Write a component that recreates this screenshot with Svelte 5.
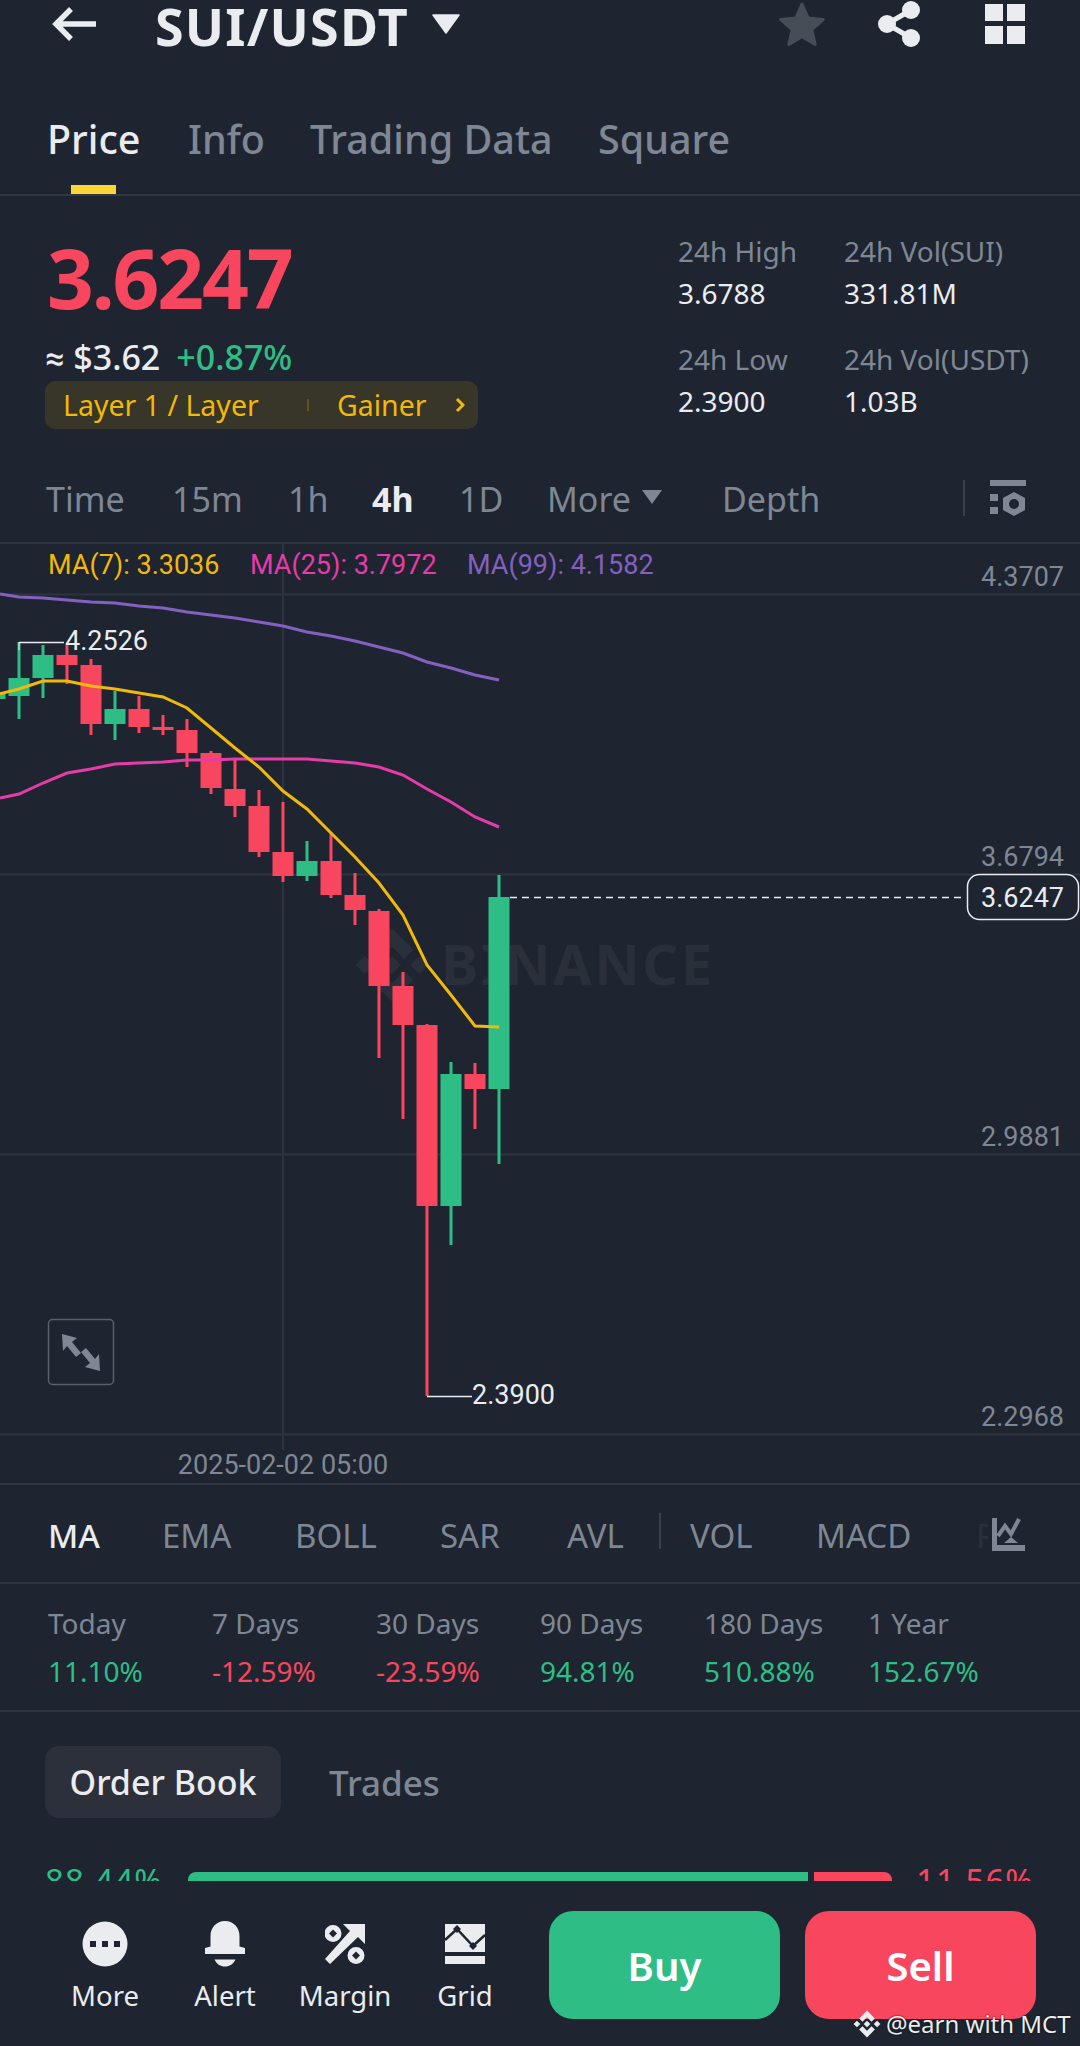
<script>
  const up = '#2ebd85', down = '#f9465f';
  // [high, low, bodyTop, bodyBottom, isUp]
  const raw = [
    [686,699,692,699,1],
    [642,719,678,696,1],[645,698,655,678,1],[645,684,655,665,0],[659,735,665,724,0],
    [691,740,709,724,1],[696,733,709,727,0],[715,735,727,730,0],[719,767,730,753,0],
    [751,794,753,788,0],[760,817,789,806,0],[790,857,806,852,0],[802,882,852,876,0],
    [841,881,861,876,1],[833,898,861,895,0],[873,925,895,910,0],[909,1058,911,986,0],
    [972,1119,986,1025,0],[1024,1396,1025,1206,0],[1062,1245,1074,1206,1],[1063,1129,1074,1089,0],
    [875,1164,897,1089,1]
  ];
  const candles = raw.map((c, i) => ({ x: -5 + i * 24, hi: c[0], lo: c[1], top: c[2], bot: c[3], up: c[4] }));
  const toPts = (ys, start) => ys.map((y, i) => `${start + i * 24},${y}`).join(' ');
  const ma7 = toPts([695,689,681,681,686,689,693,697,708,728,748,767,791,809,833,857,883,915,965,995,1026], -5) + ' 499,1027';
  const ma25 = '0,798 ' + toPts([794,783,773,769,764,763,762,760,760,759,759,759,759,761,763,767,775,789,802,817,827], 19);
  const ma99 = '0,594 ' + toPts([597,598,600,602,603,606,608,612,615,618,622,626,632,636,641,647,653,662,668,675,680], 19);
  const off = 544;
  const chartH = 940;
  const tabs = [['Price', true, 141], ['Info', false, 122], ['Trading Data', false, 288], ['Square', false, 140]];
  const stats = [['Today','11.10%',1],['7 Days','-12.59%',0],['30 Days','-23.59%',0],['90 Days','94.81%',1],['180 Days','510.88%',1],['1 Year','152.67%',1]];
  const logo = ['50,2 78,30 66,42 50,26 34,42 22,30','50,98 78,70 66,58 50,74 34,58 22,70','14,38 26,50 14,62 2,50','86,38 98,50 86,62 74,50','50,38 62,50 50,62 38,50'];
</script>

<div class="app">
  <header class="top">
    <svg class="back" viewBox="0 0 46 34" width="46" height="34"><path d="M44 17H5M19 2 4 17l15 15" fill="none" stroke="#eaecef" stroke-width="5.5"/></svg>
    <h1>SUI/USDT</h1>
    <svg class="caret" viewBox="0 0 28 20" width="28" height="20"><path d="M1 1h26L14 19z" fill="#eaecef" stroke="#eaecef" stroke-width="1.500" stroke-linejoin="round"/></svg>
    <div class="top-icons">
      <svg viewBox="0 0 46 46" width="46" height="46"><path d="M23 3l6.200 14 15 1.500-11.400 10 3.400 15L23 35.800 9.800 43.500l3.400-15-11.400-10 15-1.500z" fill="#474d57" stroke="#474d57" stroke-width="3" stroke-linejoin="round"/></svg>
      <svg class="share" viewBox="0 0 42 46" width="42" height="46"><g fill="#eaecef"><circle cx="33" cy="9" r="9"/><circle cx="9" cy="23" r="9"/><circle cx="33" cy="37" r="9"/></g><path d="M33 9 9 23l24 14" fill="none" stroke="#eaecef" stroke-width="5"/></svg>
      <svg class="apps" viewBox="0 0 40 40" width="40" height="40"><path d="M0 0h18v17H0zM22 0h18v17H22zM0 22h18v18H0zM22 22h18v18H22z" fill="#eaecef"/></svg>
    </div>
  </header>

  <nav class="tabs">
    {#each tabs as [t, on, w]}<span class="tab" class:on style:width="{w}px">{t}</span>{/each}
  </nav>

  <section class="summary">
    <div class="left">
      <div class="price">3.6247</div>
      <div class="sub"><span class="usd">≈ $3.62</span><span class="pct">+0.87%</span></div>
      <div class="tag"><span class="tag-a">Layer 1 / Layer</span><i></i><span class="tag-b">Gainer</span>
        <svg viewBox="0 0 10 16" width="10" height="16"><path d="M2 2l6 6-6 6" fill="none" stroke="#f0b90b" stroke-width="3"/></svg>
      </div>
    </div>
    <div class="facts">
      <div><label>24h High</label><b>3.6788</b></div>
      <div><label>24h Vol(SUI)</label><b>331.81M</b></div>
      <div><label>24h Low</label><b>2.3900</b></div>
      <div><label>24h Vol(USDT)</label><b>1.03B</b></div>
    </div>
  </section>

  <div class="frames">
    <span class="f1">Time</span><span class="f2">15m</span><span class="f3">1h</span><span class="f4 on">4h</span><span class="f5">1D</span>
    <span class="f6">More</span>
    <svg class="f6c" viewBox="0 0 20 14" width="20" height="14"><path d="M0 0h20L10 14z" fill="#7f8794"/></svg>
    <span class="f7">Depth</span>
    <i class="sep"></i>
    <svg class="set" viewBox="0 0 36 36" width="36" height="36"><path d="M0 0h36v6H0zM0 14h8v7H0zM0 27h8v7H0z" fill="#7f8794"/><path fill-rule="evenodd" d="M24 12l11 6v12l-11 6-11-6V18zM24 19a5 5 0 100 10 5 5 0 000-10z" fill="#7f8794"/></svg>
  </div>

  <div class="chart">
    <svg viewBox="0 {off} 1080 {chartH}" width="1080" height={chartH}>
      <g stroke="#2e343e" stroke-width="2">
        <path d="M0 594.500H1080M0 874.500H1080M0 1154.500H1080M0 1434.500H1080" fill="none"/>
        <path d="M283 544V1450" fill="none"/>
      </g>
      <g fill="#2a2f3a">
        {#each logo as p}<polygon points={p} transform="translate(354 927) scale(.76)"/>{/each}
        <text x="441" y="985" class="wm">BINANCE</text>
      </g>
      {#each candles as c}
        <rect x={c.x - 1.500} y={c.hi} width="3" height={c.lo - c.hi} fill={c.up ? up : down}/>
        <rect x={c.x - 10.500} y={c.top} width="21" height={c.bot - c.top} fill={c.up ? up : down}/>
      {/each}
      <polyline points={ma99} fill="none" stroke="#8460c0" stroke-width="3"/>
      <polyline points={ma25} fill="none" stroke="#e63ba8" stroke-width="3"/>
      <polyline points={ma7} fill="none" stroke="#f0b90b" stroke-width="3"/>

      <path d="M19 642.500H64M427 1396.500H472" stroke="#eaecef" stroke-width="1.500" fill="none"/>
      <path d="M19 642v8" stroke="#eaecef" stroke-width="1"/>
      <path d="M510 897.500H962" stroke="#eaecef" stroke-width="1.500" stroke-dasharray="7 5" fill="none"/>

      <text x="48" y="574" class="ma" fill="#f0b90b">MA(7): 3.3036</text>
      <text x="250" y="574" class="ma" fill="#e63ba8">MA(25): 3.7972</text>
      <text x="467" y="574" class="ma" fill="#8460c0">MA(99): 4.1582</text>

      <text x="65" y="650" class="ma" fill="#eaecef">4.2526</text>
      <text x="472" y="1404" class="ma" fill="#eaecef">2.3900</text>

      <g class="axis" text-anchor="end" fill="#7f8794">
        <text x="1064" y="586">4.3707</text>
        <text x="1064" y="866">3.6794</text>
        <text x="1064" y="1146">2.9881</text>
        <text x="1064" y="1426">2.2968</text>
      </g>
      <rect x="967.500" y="874.500" width="111" height="45" rx="12" fill="#1e2530" stroke="#eaecef" stroke-width="1.500"/>
      <text x="1064" y="907" class="axis" text-anchor="end" fill="#eaecef">3.6247</text>

      <rect x="48.500" y="1319.500" width="65" height="65" rx="4" fill="#1e2530" stroke="#5a616d" stroke-width="1.500"/>
      <path d="M62 1334l15 4-5 4 9 11-5 4-9-11-4 5zM100 1371l-15-4 5-4-9-11 5-4 9 11 4-5z" fill="#7f8794"/>
      <text x="283" y="1474" class="axis" text-anchor="middle" fill="#7f8794">2025-02-02 05:00</text>
    </svg>
  </div>

  <div class="inds">
    <span class="on i1">MA</span><span class="i2">EMA</span><span class="i3">BOLL</span><span class="i4">SAR</span><span class="i5">AVL</span>
    <i class="sep2"></i>
    <span class="i6">VOL</span><span class="i7">MACD</span><span class="i8">RSI</span>
    <svg class="ind-icon" viewBox="0 0 33 33" width="33" height="33"><path d="M0 0h5v27h28v6H0z" fill="#7f8794"/><path d="M6 18l7-10 6 8 8-15" fill="none" stroke="#7f8794" stroke-width="4"/><path d="M19 19l7 6H12z" fill="#7f8794"/></svg>
  </div>

  <div class="perf">
    {#each stats as [l, v, g]}
      <div><label>{l}</label><b class:g={g} class:r={!g}>{v}</b></div>
    {/each}
  </div>

  <section class="book">
    <div class="book-tabs"><span class="pill">Order Book</span><span class="tr">Trades</span></div>
    <div class="ratio">
      <span class="g">88.44%</span>
      <div class="bar"><em class="bg"></em><em class="br"></em></div>
      <span class="r">11.56%</span>
    </div>
  </section>

  <footer class="bottom">
    <div class="act"><svg viewBox="0 0 46 46" width="46" height="46"><circle cx="23" cy="23" r="22.500" fill="#eaecef"/><path d="M8 20h6v6H8zM20 20h6v6h-6zM32 20h6v6h-6z" fill="#1e2530"/></svg><span>More</span></div>
    <div class="act"><svg viewBox="0 0 46 46" width="46" height="46"><path d="M23 0c9 0 14.500 7 14.500 15v10.500L43 27v6H3v-6l5.500-1.500V15C8.500 7 14 0 23 0zM12.500 38.500h21C31.500 43 27.500 45.500 23 45.500S14.500 43 12.500 38.500z" fill="#eaecef"/></svg><span>Alert</span></div>
    <div class="act"><svg viewBox="0 0 40 40" width="40" height="46"><g fill="#eaecef"><path d="M18 0h22v20l-7-7L5 40l-5-5L25 7z"/><path fill-rule="evenodd" d="M8 1a8.500 8.500 0 100 17A8.500 8.500 0 008 1zM8 5.500l4 4-4 4-4-4zM31 23a8.500 8.500 0 100 17 8.500 8.500 0 000-17zM31 27.500l4 4-4 4-4-4z"/></g></svg><span>Margin</span></div>
    <div class="act"><svg viewBox="0 0 40 40" width="40" height="46"><path d="M0 0h40v28H0zM0 32h40v8H0z" fill="#eaecef"/><path d="M0 16 12 5l16 17L40 11" fill="none" stroke="#1e2530" stroke-width="2.500"/><path d="M12 1l4 4-4 4-4-4zM28 18l4 4-4 4-4-4z" fill="#1e2530"/></svg><span>Grid</span></div>
    <button class="buy">Buy</button>
    <button class="sell">Sell</button>
    <div class="credit">
      <svg viewBox="0 0 100 100" width="28" height="28">{#each logo as p}<polygon points={p} fill="#eaecef"/>{/each}</svg>
      <span>@earn with MCT</span>
    </div>
  </footer>
</div>

<style>
  :global(body) { margin: 0; background: #1e2530; }
  .app { position: relative; width: 1080px; height: 2046px; overflow: hidden; background: #1e2530; color: #eaecef; font-family: "Noto Sans", Roboto, sans-serif; display: flex; flex-direction: column; }
  i, em { display: block; font-style: normal; }
  label { display: block; color: #7f8794; }

  .top { height: 52px; flex: none; display: flex; align-items: center; padding-left: 52px; }
  .back { margin-top: -4px; }
  h1 { margin: -4px 0 0 57px; width: 277px; font-size: 52px; font-weight: 700; line-height: 60px; height: 56px; letter-spacing: 1.200px; white-space: nowrap; }
  .caret { margin: -4px 0 0 0; }
  .top-icons { margin-left: auto; display: flex; align-items: center; padding-right: 55px; margin-top: -4px; }
  .share { margin-left: 53px; }
  .apps { margin-left: 65px; }

  .tabs { height: 144px; flex: none; box-sizing: border-box; display: flex; padding: 62px 0 0 47px; border-bottom: 2px solid #323843; font-size: 39.500px; line-height: 50px; color: #7f8794; font-weight: 500; }
  .tab { position: relative; height: 80px; flex: none; }
  .tab.on { color: #eaecef; }
  .tab.on::after { content: ''; position: absolute; left: 24px; bottom: 0; width: 45px; height: 9px; background: #fcd535; }

  .summary { flex: none; height: 233px; display: flex; }
  .left { width: 678px; padding: 36px 0 0 45px; box-sizing: border-box; flex: none; }
  .price { font-size: 82px; line-height: 90px; font-weight: 700; color: #f9465f; margin-left: 2px; letter-spacing: -2.200px; }
  .sub { display: flex; gap: 16px; font-size: 34px; line-height: 40px; margin-top: 15px; font-weight: 500; }
  .pct { color: #2ebd85; }
  .tag { margin-top: 4px; width: 433px; height: 48px; box-sizing: border-box; border-radius: 10px; background: #383529; display: flex; align-items: center; padding-left: 18px; font-size: 28.500px; color: #f0b90b; }
  .tag-a { width: 244px; flex: none; }
  .tag i { width: 2px; height: 12px; background: #5c5222; flex: none; }
  .tag-b { margin-left: 28px; width: 118px; flex: none; }
  .facts { display: grid; grid-template-columns: 166px 236px; grid-auto-rows: 108px; padding-top: 36px; font-size: 28px; line-height: 38px; }
  .facts b { display: block; font-weight: 400; margin-top: 4px; }

  .frames { flex: none; height: 115px; position: relative; display: flex; align-items: center; font-size: 34px; color: #7f8794; box-sizing: border-box; padding: 26px 0 0 46px; border-bottom: 2px solid #2e343e; }
  .frames span { flex: none; }
  .frames .on { color: #eaecef; font-weight: 700; }
  .f1 { width: 126px; } .f2 { width: 116px; } .f3 { width: 84px; } .f4 { width: 87px; } .f5 { width: 88px; } .f6 { width: 95px; }
  .f6c { margin: -4px 0 0 0; flex: none; }
  .f7 { margin-left: 60px; }
  .sep { width: 2px; height: 36px; background: #3a404b; margin-left: auto; margin-top: -2px; }
  .set { margin: -2px 54px 0 25px; flex: none; }

  .chart { flex: none; height: 939px; }
  .chart svg { display: block; }
  .ma { font-size: 27px; font-family: Roboto, sans-serif; }
  .axis text, text.axis { font-size: 27px; font-family: Roboto, sans-serif; }
  .wm { font-size: 56px; font-weight: 700; font-family: "Noto Sans", sans-serif; letter-spacing: 2.500px; }

  .inds { flex: none; height: 101px; border-top: 2px solid #323843; border-bottom: 2px solid #2e343e; box-sizing: border-box; position: relative; display: flex; align-items: center; padding: 3px 0 0 48px; font-size: 33px; color: #7f8794; }
  .inds span { flex: none; }
  .inds .on { color: #eaecef; font-weight: 500; }
  .i1 { width: 114px; } .i2 { width: 133px; } .i3 { width: 145px; } .i4 { width: 127px; } .i5 { width: 92px; }
  .sep2 { width: 2px; height: 36px; background: #3a404b; margin-right: 29px; margin-top: -9px; flex: none; }
  .i6 { width: 126px; } .i7 { width: 160px; }
  .i8 { opacity: .12; width: 12px; overflow: hidden; }
  .ind-icon { position: absolute; left: 992px; top: 33px; }

  .perf { flex: none; height: 128px; box-sizing: border-box; border-bottom: 2px solid #2e343e; display: grid; grid-template-columns: repeat(6, 164px); padding: 20px 0 0 48px; font-size: 28px; line-height: 38px; }
  .perf b { display: block; font-weight: 400; margin-top: 10px; }
  .g { color: #2ebd85; } .r { color: #f9465f; }

  .book { flex: none; height: 169px; overflow: hidden; box-sizing: border-box; padding: 34px 0 0 45px; }
  .book-tabs { display: flex; align-items: center; font-size: 34px; font-weight: 500; }
  .pill { width: 236px; height: 72px; border-radius: 14px; background: #2b303b; display: flex; align-items: center; justify-content: center; }
  .tr { margin-left: 48px; color: #7f8794; font-size: 35px; }
  .ratio { display: flex; align-items: flex-start; margin-top: 43px; font-size: 33px; line-height: 40px; letter-spacing: 1px; }
  .ratio .g { width: 143px; flex: none; }
  .ratio .r { margin-left: 24px; }
  .bar { display: flex; gap: 6px; width: 704px; margin-top: 11px; flex: none; }
  .bg { width: 620px; height: 40px; background: #2ebd85; border-radius: 8px 0 0 8px; }
  .br { width: 78px; height: 40px; background: #f9465f; border-radius: 0 8px 8px 0; }

  .bottom { flex: 1; position: relative; display: flex; align-items: flex-start; padding: 30px 0 0 45px; }
  .act { width: 120px; flex: none; display: flex; flex-direction: column; align-items: center; font-size: 27.500px; line-height: 38px; padding-top: 10px; }
  .act svg { margin-bottom: 10px; }
  button { border: 0; padding: 0; font: inherit; color: #fff; width: 231px; height: 108px; border-radius: 24px; font-size: 40px; font-weight: 600; flex: none; }
  .buy { background: #2ebd85; margin-left: 24px; }
  .sell { background: #f9465f; margin-left: 25px; }
  .credit { position: absolute; left: 853px; top: 126px; display: flex; align-items: center; gap: 5px; font-size: 24px; line-height: 34px; white-space: nowrap; text-shadow: 0 0 2px #000; }
</style>
